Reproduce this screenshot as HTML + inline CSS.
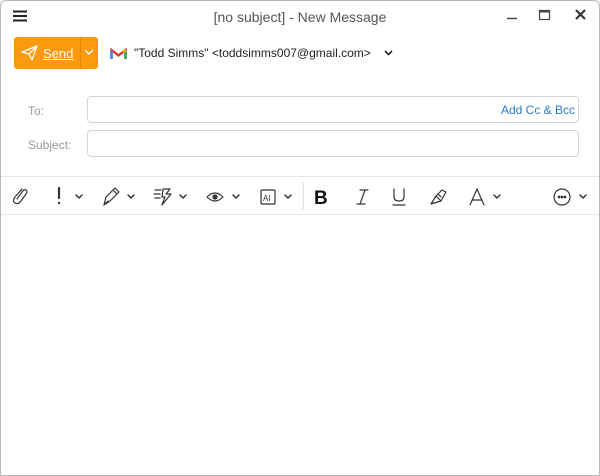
<!DOCTYPE html>
<html><head><meta charset="utf-8"><style>
*{margin:0;padding:0;box-sizing:border-box}
body{width:600px;height:476px;background:#fff;font-family:"Liberation Sans","DejaVu Sans",sans-serif;position:relative;overflow:hidden}
.frame{position:absolute;inset:0;border:1px solid #b8b8b8;border-radius:6px 6px 0 0}
.a{position:absolute}
.title{left:0;width:600px;top:9px;text-align:center;font-size:14px;color:#555}
.send{left:14px;top:37px;width:84px;height:32px;background:#fb9a0f;border-radius:3px}
.sendtxt{left:43px;top:46px;color:#fff;font-size:13px;text-decoration:underline;text-decoration-thickness:1px}
.sep{left:80px;top:37px;width:1px;height:32px;background:#e88a00}
.from{left:134px;top:46px;font-size:12px;color:#222}
.lbl{font-size:12px;color:#999}
.box{left:87px;width:492px;height:27px;border:1px solid #d4d4d4;border-radius:4px}
.line{left:1px;width:598px;height:1px;background:#e6e6e6}
</style></head><body>
<div class="frame"></div>
<svg class="a" style="left:13px;top:10px" width="14" height="12"><path d="M0 1.5H14M0 6H14M0 10.5H14" stroke="#222" stroke-width="2"/></svg>
<div class="a title">[no subject] - New Message</div>
<svg class="a" style="left:505px;top:8px" width="90" height="16"><path d="M2 10.5H12" stroke="#555" stroke-width="1.6"/><rect x="34.5" y="2.5" width="10" height="9" fill="none" stroke="#444" stroke-width="1.2"/><path d="M34.5 3.5H44.5" stroke="#444" stroke-width="2"/><path d="M71 2L80 11M80 2L71 11" stroke="#333" stroke-width="2.2"/></svg>
<div class="a send"></div>
<div class="a sep"></div>
<svg class="a" style="left:21px;top:44px" width="18" height="18"><path d="M1 8L16 2L11 16L8 10Z M8 10L16 2" fill="none" stroke="#fff" stroke-width="1.3" stroke-linejoin="round"/></svg>
<div class="a sendtxt">Send</div>
<svg class="a" style="left:84px;top:49px" width="10" height="6"><path d="M1 1L5 5L9 1" fill="none" stroke="#fff" stroke-width="1.3"/></svg>
<svg class="a" style="left:110px;top:47px" width="17" height="13"><path d="M1.5 12V3L8.5 8.5L15.5 3V12" fill="none" stroke="#e53935" stroke-width="2.4"/><path d="M1.5 12V4" stroke="#4285f4" stroke-width="2.6"/><path d="M15.5 12V4" stroke="#34a853" stroke-width="2.6"/><path d="M13 5L15.5 3" stroke="#fbbc04" stroke-width="2.4"/></svg>
<div class="a from">"Todd Simms" &lt;toddsimms007@gmail.com&gt;</div>
<svg class="a" style="left:384px;top:50px" width="9" height="6"><path d="M1 1L4.5 4.5L8 1" fill="none" stroke="#222" stroke-width="1.6"/></svg>
<div class="a lbl" style="left:28px;top:104px">To:</div>
<div class="a box" style="top:96px"></div>
<div class="a" style="left:501px;top:103px;font-size:12px;color:#2b7cd3">Add Cc &amp; Bcc</div>
<div class="a lbl" style="left:28px;top:138px">Subject:</div>
<div class="a box" style="top:130px"></div>
<div class="a line" style="top:176px"></div>
<div class="a line" style="top:214px"></div>
<div class="a" style="left:303px;top:182px;width:1px;height:28px;background:#e2e2e2"></div>
<svg class="a" style="left:0;top:180px" width="600" height="34" fill="none" stroke="#333" stroke-width="1.2" stroke-linecap="round" stroke-linejoin="round">
<path d="M22 9L15 17Q12 21 15 23Q18 25 21 21L26 14Q28 11 26 10Q24 9 22 12L17 19"/>
<path d="M59 8V18" stroke-width="2.2"/><circle cx="59" cy="23" r="1.2" fill="#333" stroke="none"/>
<path d="M76 15L79 18L82 15M128 15L131 18L134 15M180 15L183 18L186 15M233 15L236 18L239 15M285 15L288 18L291 15M494 15L497 18L500 15M580 15L583 18L586 15" stroke-width="1.5"/>
<path d="M104 25L106 17L113 10L117 14L110 21Z M113 10L115 8L119 12L117 14 M104 25L108 21"/>
<path d="M155 10H161M154 14H160M155 18H160M163 9H170L166 14H171L162 25L165 17H162Z"/>
<path d="M207 17Q215 9 223 17Q215 25 207 17Z"/><circle cx="215" cy="17" r="2" fill="#333"/>
<rect x="261" y="10" width="14" height="14" rx="1"/><text x="263" y="21" font-size="8" fill="#333" stroke="none" font-family="Liberation Sans">AI</text>
<text x="314" y="24" font-size="19" font-weight="bold" fill="#111" stroke="none" font-family="Liberation Sans">B</text>
<path d="M360 10H368M357 24H365M365 10L360 24"/>
<path d="M394 9V17Q394 21 399 21Q404 21 404 17V9M393 25H405"/>
<path d="M431 24L436 16L441 21Z M436 16L442 10L446 12L441 21 M438 14L441 17"/>
<path d="M470 25L477 9L484 25M472.5 20H481.5"/>
<circle cx="562" cy="17" r="8"/><circle cx="559" cy="17" r=".8" fill="#333"/><circle cx="562" cy="17" r=".8" fill="#333"/><circle cx="565" cy="17" r=".8" fill="#333"/>
</svg>
</body></html>
